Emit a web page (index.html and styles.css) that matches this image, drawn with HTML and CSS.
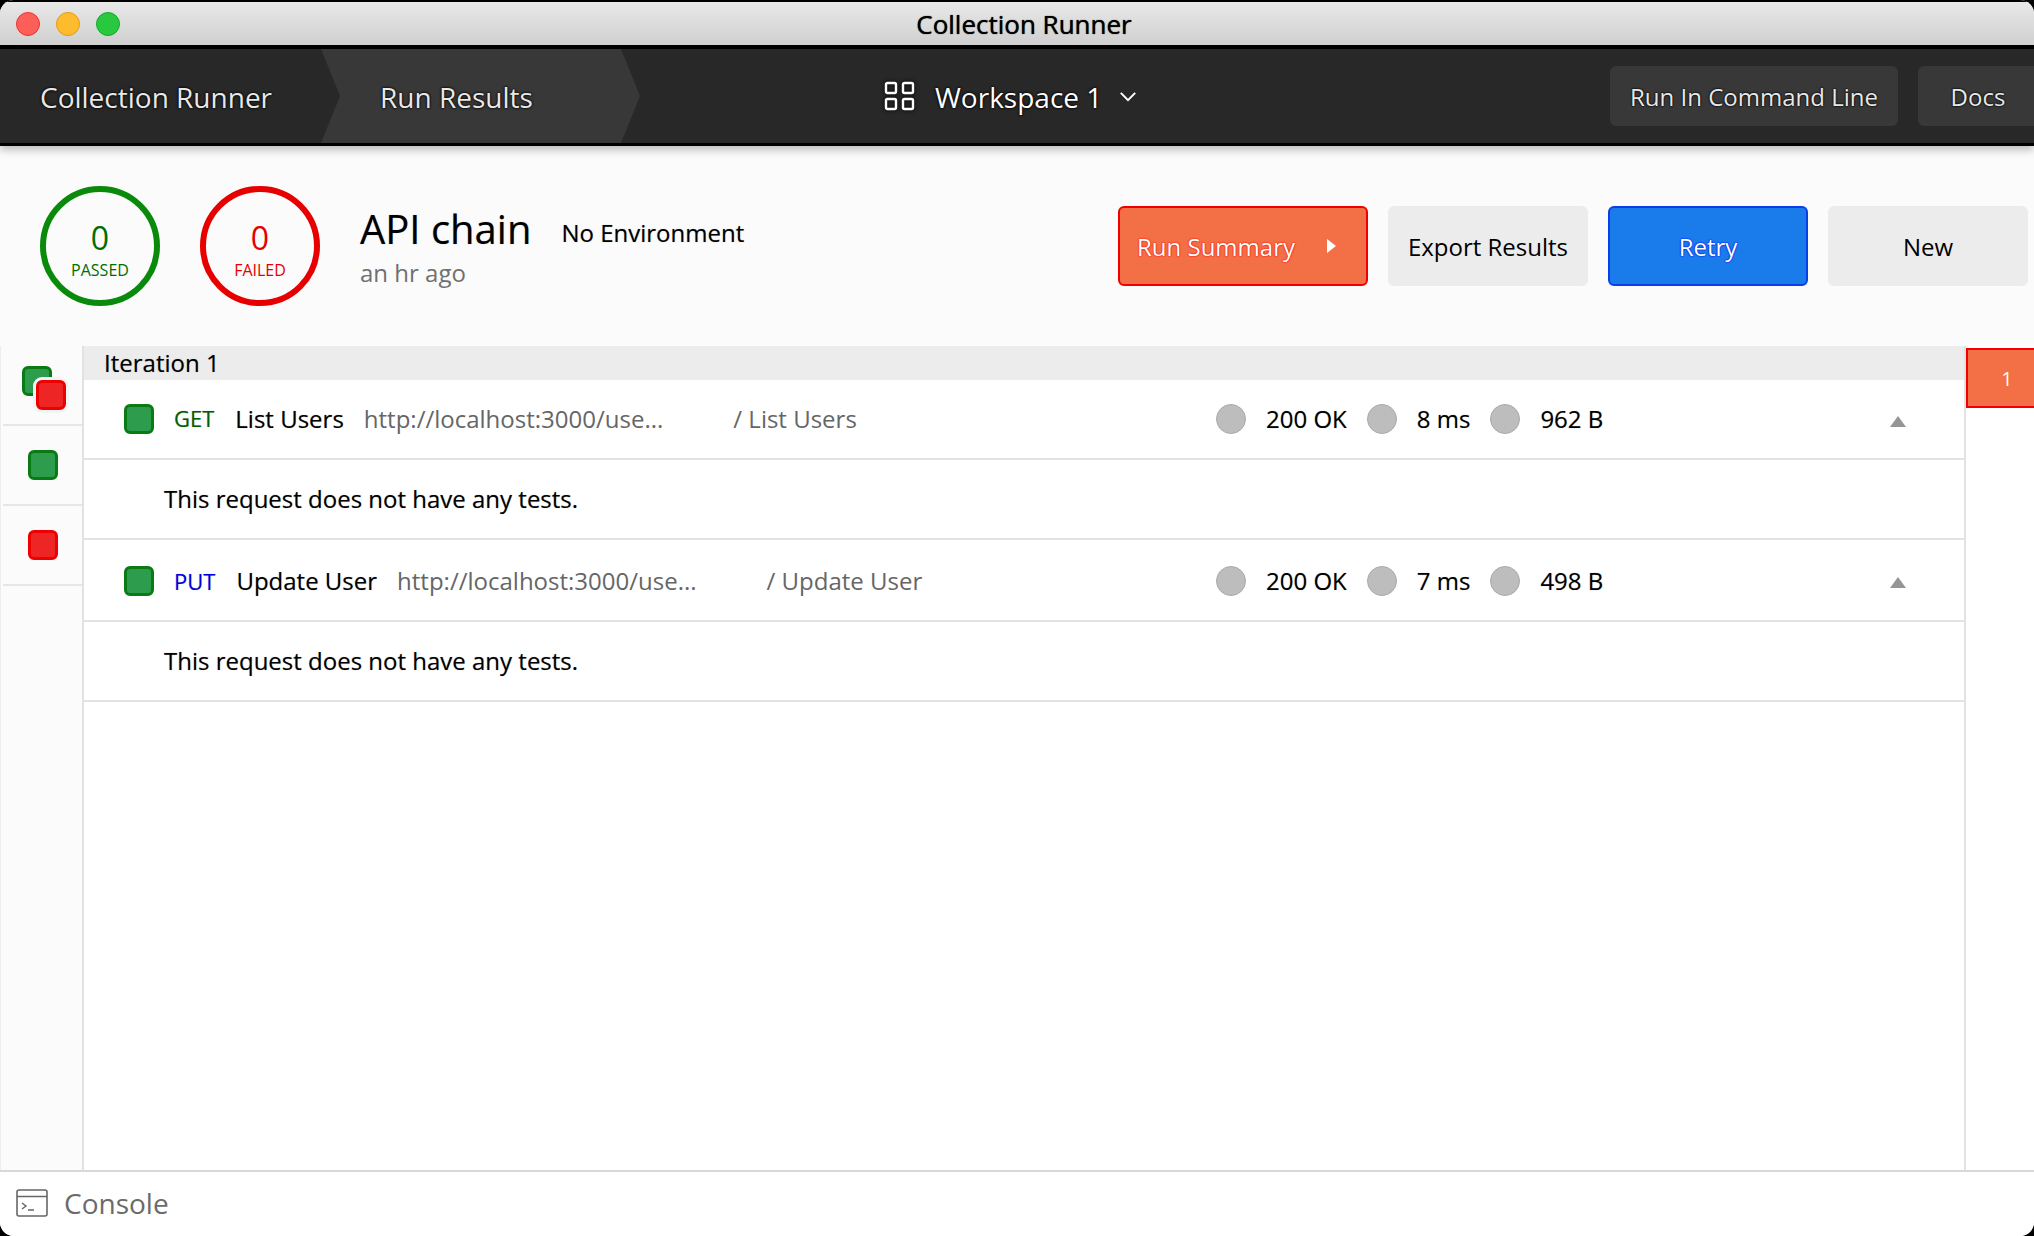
FILE: index.html
```html
<!DOCTYPE html>
<html lang="en">
<head>
<meta charset="utf-8">
<title>Collection Runner</title>
<link rel="stylesheet" href="styles.css">
</head>
<body>
<div class="app">
  <header class="titlebar">
    <div class="lights"><span class="light red"></span><span class="light yellow"></span><span class="light green"></span></div>
    <div class="wintitle">Collection Runner</div>
  </header>
  <nav class="nav">
    <div class="crumb first"><span class="crumb-text">Collection Runner</span></div>
    <div class="crumb second"><span class="crumb-text">Run Results</span></div>
    <div class="workspace">
      <svg class="ws-icon" viewBox="0 0 31 30" fill="none" stroke="#fff" stroke-width="2.4"><rect x="2" y="2" width="10" height="10" rx="1.5"/><rect x="19" y="2" width="10" height="10" rx="1.5"/><rect x="2" y="18" width="10" height="10" rx="1.5"/><rect x="19" y="18" width="10" height="10" rx="1.5"/></svg>
      <span class="ws-name">Workspace 1</span>
      <svg class="ws-chev" viewBox="0 0 20 12" fill="none" stroke="#fff" stroke-width="2.2"><path d="M2 2l8 8 8-8"/></svg>
    </div>
    <div class="nav-actions">
      <button class="navbtn">Run In Command Line</button>
      <button class="navbtn docs">Docs</button>
    </div>
  </nav>
  <section class="summary">
    <div class="stat passed"><span class="stat-num">0</span><span class="stat-label">PASSED</span></div>
    <div class="stat failed"><span class="stat-num">0</span><span class="stat-label">FAILED</span></div>
    <div class="runinfo">
      <div class="runhead"><span class="runname">API chain</span><span class="runenv">No Environment</span></div>
      <div class="runtime">an hr ago</div>
    </div>
    <div class="actions">
      <button class="btn orange">Run Summary<svg class="btn-arrow" viewBox="0 0 11 16"><path d="M1 1l9 7-9 7z" fill="#fff"/></svg></button>
      <button class="btn export">Export Results</button>
      <button class="btn blue">Retry</button>
      <button class="btn">New</button>
    </div>
  </section>
  <main class="results">
    <aside class="rail">
      <div class="rail-item"><span class="stack"><span class="sq ok back"></span><span class="sq bad front"></span></span></div>
      <div class="rail-item"><span class="sq ok"></span></div>
      <div class="rail-item"><span class="sq bad"></span></div>
    </aside>
    <div class="list">
      <div class="iter">Iteration 1</div>
      <div class="req req-first">
        <div class="req-left">
          <span class="sq ok"></span>
          <span class="method get">GET</span>
          <span class="reqname">List Users</span>
          <span class="url">http://localhost:3000/use...</span>
          <span class="path">/ List Users</span>
        </div>
        <div class="metrics">
          <span class="dot"></span><span class="m m-status">200 OK</span>
          <span class="dot"></span><span class="m m-time">8 ms</span>
          <span class="dot"></span><span class="m">962 B</span>
        </div>
        <span class="tri"></span>
      </div>
      <div class="tests">This request does not have any tests.</div>
      <div class="req req-second">
        <div class="req-left">
          <span class="sq ok"></span>
          <span class="method put">PUT</span>
          <span class="reqname">Update User</span>
          <span class="url">http://localhost:3000/use...</span>
          <span class="path">/ Update User</span>
        </div>
        <div class="metrics">
          <span class="dot"></span><span class="m m-status">200 OK</span>
          <span class="dot"></span><span class="m m-time">7 ms</span>
          <span class="dot"></span><span class="m">498 B</span>
        </div>
        <span class="tri"></span>
      </div>
      <div class="tests">This request does not have any tests.</div>
    </div>
    <aside class="pages"><div class="page">1</div></aside>
  </main>
  <footer class="footer">
    <svg class="console-icon" viewBox="0 0 32 28" fill="none" stroke="#666" stroke-width="1.6"><rect x="1" y="1" width="30" height="26" rx="2"/><path d="M1 7.5h30"/><path d="M6 14l4 3-4 3" stroke-width="1.4"/><path d="M12 21h6" stroke-width="1.6"/></svg>
    <span class="console-text">Console</span>
  </footer>
</div>
</body>
</html>
```
FILE: styles.css
```css
* { box-sizing: border-box; }
html, body { margin: 0; height: 100%; background: #000; }
body { font-family: "Open Sans", "Noto Sans", sans-serif; color: #000; overflow: hidden; text-shadow: 0 0 1px rgba(0,0,0,.35); }
button { font: inherit; margin: 0; cursor: pointer; }

.app {
  width: 2034px; height: 1236px; display: flex; flex-direction: column;
  background: #fff; border-radius: 14px; overflow: hidden;
}

.titlebar {
  flex: none; height: 49px; padding-top: 2px; position: relative;
  border-top: 2px solid #000; border-bottom: 4px solid #000;
  background: linear-gradient(#e8e8e8, #d0d0d0);
  display: flex; align-items: center; justify-content: center;
}
.lights { position: absolute; left: 16px; top: 10px; display: flex; gap: 16px; }
.light { width: 24px; height: 24px; border-radius: 50%; }
.red { background: #fc5f57; border: 1px solid #e33; }
.yellow { background: #fdbc2e; border: 1px solid #e59a10; }
.green { background: #28c83f; border: 1px solid #17a92c; }
.wintitle { font-size: 26px; line-height: 30px; margin: -2px 0 0 14px; text-shadow: 0 0 1px #000; }

.nav {
  flex: none; height: 97px; background: #282828; border-bottom: 3px solid #000;
  display: flex; align-items: center; color: #fff;
  box-shadow: 0 4px 8px rgba(0,0,0,.25); position: relative; z-index: 1;
}
.crumb {
  height: 100%; display: flex; align-items: center;
  font-size: 28px; color: #e8e8e8; text-shadow: 0 0 3px #000, 0 0 2px #000;
}
.crumb-text { margin-top: 2px; }
.crumb.first { width: 321px; padding-left: 40px; }
.crumb.second {
  width: 319px; padding-left: 59px; background: #383838;
  clip-path: polygon(0 0, 300px 0, 319px 50%, 300px 100%, 0 100%, 19px 50%);
}
.workspace { display: flex; align-items: center; margin-left: 244px; }
.ws-icon { width: 31px; height: 30px; filter: drop-shadow(0 0 2px #000); }
.ws-name { margin: 2px 0 0 20px; font-size: 28px; text-shadow: 0 0 3px #000, 0 0 2px #000; }
.ws-chev { width: 18px; height: 11px; margin-left: 17px; }
.nav-actions { margin-left: auto; display: flex; gap: 20px; }
.navbtn {
  height: 60px; width: 288px; padding: 0; border: 0; border-radius: 6px;
  background: #383838; color: #e8e8e8; font-size: 24px; text-shadow: 0 0 2px #000, 0 0 2px #000;
}
.navbtn.docs { width: 116px; padding-left: 4px; border-radius: 6px 0 0 6px; }

.summary {
  flex: none; height: 200px; background: #fbfbfb; padding: 0 6px 0 40px;
  display: flex; align-items: center;
}
.stat {
  width: 120px; height: 120px; border: 6px solid; border-radius: 50%; margin-right: 40px;
  display: flex; flex-direction: column; align-items: center; justify-content: center;
}
.passed { color: #006d00; border-color: #0a8a0a; text-shadow: none; }
.failed { color: #e60000; border-color: #e60000; text-shadow: none; }
.stat-num { font-size: 32px; line-height: 36px; margin-top: 8px; }
.stat-label { font-size: 16px; line-height: 22px; margin-top: 3px; }
.runinfo { padding-top: 2px; }
.runhead { display: flex; align-items: baseline; gap: 30px; }
.runname { font-size: 40px; line-height: 50px; }
.runenv { font-size: 24px; position: relative; top: -2px; }
.runtime { font-size: 24px; color: #707070; line-height: 34px; margin-top: 2px; text-shadow: none; }
.actions { margin-left: auto; display: flex; gap: 20px; }
.btn {
  width: 200px; height: 80px; padding: 0; background: #ececec; border: 0; border-radius: 6px;
  font-size: 24px; color: #000; display: flex; align-items: center; justify-content: center;
}
.orange {
  width: 250px; background: #f36f45; border: 2px solid #f00000; color: #fff;
  text-shadow: 0 0 2px #f00, 0 0 1px #f00; justify-content: flex-start; padding-left: 17px; gap: 31px;
}
.blue { background: #1a7cea; border: 2px solid #0a3ee8; color: #fff; text-shadow: 0 0 2px #00f, 0 0 1px #00f; }
.btn-arrow { width: 11px; height: 16px; }

.results { flex: 1; min-height: 0; display: flex; background: #fff; }
.rail { flex: none; width: 84px; padding-left: 2px; background: #fbfbfb; border-right: 2px solid #e2e2e2; border-left: 1px solid #eee; }
.rail-item {
  height: 80px; display: flex; align-items: center; justify-content: center;
  border-bottom: 2px solid #e6e6e6;
}
.sq {
  display: block; flex: none; width: 30px; height: 30px; border-radius: 6px;
}
.sq.ok { background: #2e9c4d; border: 3px solid #0a7a14; }
.sq.bad { background: #ee2525; border: 3px solid #ee0000; }
.stack { position: relative; width: 44px; height: 44px; margin: 6px 0 0 3px; }
.stack .back { position: absolute; left: 0; top: 0; }
.stack .front { position: absolute; left: 14px; top: 14px; box-shadow: 0 0 0 3px #f0f6f6; }

.list { flex: 1; min-width: 0; display: flex; flex-direction: column; }
.iter { flex: none; height: 34px; background: #ececec; padding-left: 20px; font-size: 24px; line-height: 34px; }
.req {
  flex: none; display: flex; align-items: center; padding-left: 40px;
  border-bottom: 2px solid #e2e2e2;
}
.req-first { height: 80px; }
.req-second { height: 82px; padding-top: 1px; }
.req-left { width: 1092px; display: flex; align-items: center; font-size: 24px; }
.req-first .method, .req-first .reqname, .req-first .url, .req-first .path, .req-first .m { margin-bottom: 2px; }
.method { margin-left: 20px; font-size: 22px; }
.get { color: #005f00; }
.put { color: #0000e6; }
.reqname { margin-left: 21px; }
.url { margin-left: 20px; color: #666; text-shadow: none; }
.path { margin-left: 70px; color: #666; text-shadow: none; }
.metrics { display: flex; align-items: center; font-size: 24px; }
.dot { width: 30px; height: 30px; border-radius: 50%; background: #bdbdbd; border: 1px solid #aaa; }
.m { margin-left: 20px; }
.m-status, .m-time { margin-right: 20px; }
.tri {
  margin: 4px 58px 0 auto; width: 0; height: 0;
  border-left: 8px solid transparent; border-right: 8px solid transparent; border-bottom: 11px solid #959595;
}
.tests {
  flex: none; height: 80px; padding-left: 80px; font-size: 24px; line-height: 78px;
  border-bottom: 2px solid #e2e2e2;
}
.pages { flex: none; width: 70px; padding-top: 2px; border-left: 2px solid #e2e2e2; }
.page {
  height: 60px; background: #f36f45; border: 2px solid #f00000; border-right: 0;
  color: #fff; font-size: 20px; padding-left: 12px; display: flex; align-items: center; justify-content: center;
  text-shadow: 0 0 1px #f60;
}

.footer {
  flex: none; height: 66px; border-top: 2px solid #d8d8d8; background: #fff;
  display: flex; align-items: center; padding: 0 0 3px 16px;
}
.console-icon { width: 32px; height: 28px; }
.console-text { margin-left: 16px; font-size: 28px; color: #6b6b6b; text-shadow: none; }
```
